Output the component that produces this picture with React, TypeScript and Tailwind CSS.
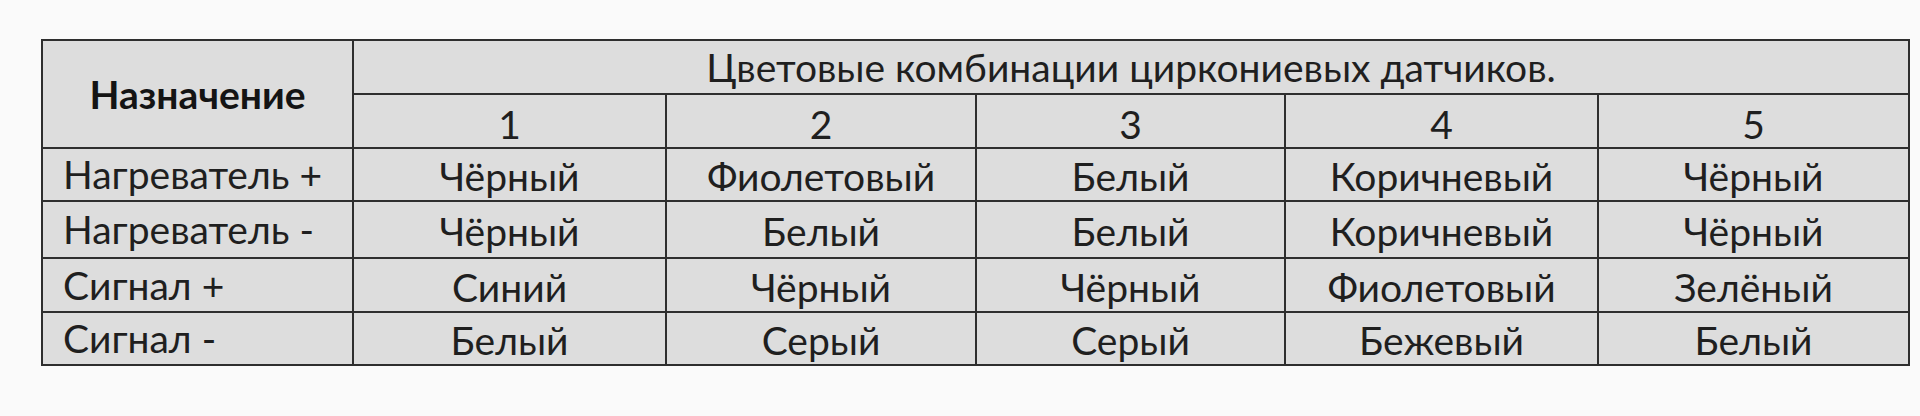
const rows: [string, string[]][] = [
  ["Нагреватель +", ["Чёрный", "Фиолетовый", "Белый", "Коричневый", "Чёрный"]],
  ["Нагреватель -", ["Чёрный", "Белый", "Белый", "Коричневый", "Чёрный"]],
  ["Сигнал +", ["Синий", "Чёрный", "Чёрный", "Фиолетовый", "Зелёный"]],
  ["Сигнал -", ["Белый", "Серый", "Серый", "Бежевый", "Белый"]],
];

const rowHeights = ["h-[53px]", "h-[57px]", "h-[54px]", "h-[53px]"];

const cell = "border-2 border-[#2e2e2e] p-0 leading-none";

export default function App() {
  return (
    <div className="min-h-screen w-full bg-[#fafafa] pt-[39px] pl-[41px] font-['Lato','Noto_Sans',sans-serif] text-[#1f1f1f]">
      <table className="w-[1867px] table-fixed border-collapse bg-[#dddddd] text-[39px]">
        <colgroup>
          <col className="w-[311px]" />
          <col className="w-[313px]" />
          <col className="w-[310px]" />
          <col className="w-[309px]" />
          <col className="w-[313px]" />
          <col className="w-[311px]" />
        </colgroup>
        <thead>
          <tr className="h-[54px]">
            <th rowSpan={2} className={`${cell} text-center font-bold text-[#141414]`}>
              Назначение
            </th>
            <th colSpan={5} className={`${cell} text-center font-normal`}>
              Цветовые комбинации циркониевых датчиков.
            </th>
          </tr>
          <tr className="h-[54px]">
            {[1, 2, 3, 4, 5].map((n) => (
              <th key={n} className={`${cell} text-center font-normal pt-[6px]`}>
                {n}
              </th>
            ))}
          </tr>
        </thead>
        <tbody>
          {rows.map(([name, colors], i) => (
            <tr key={name} className={rowHeights[i]}>
              <td className={`${cell} pl-[20px] text-left`}>{name}</td>
              {colors.map((c, j) => (
                <td key={j} className={`${cell} text-center pt-[4px]`}>
                  {c}
                </td>
              ))}
            </tr>
          ))}
        </tbody>
      </table>
    </div>
  );
}
